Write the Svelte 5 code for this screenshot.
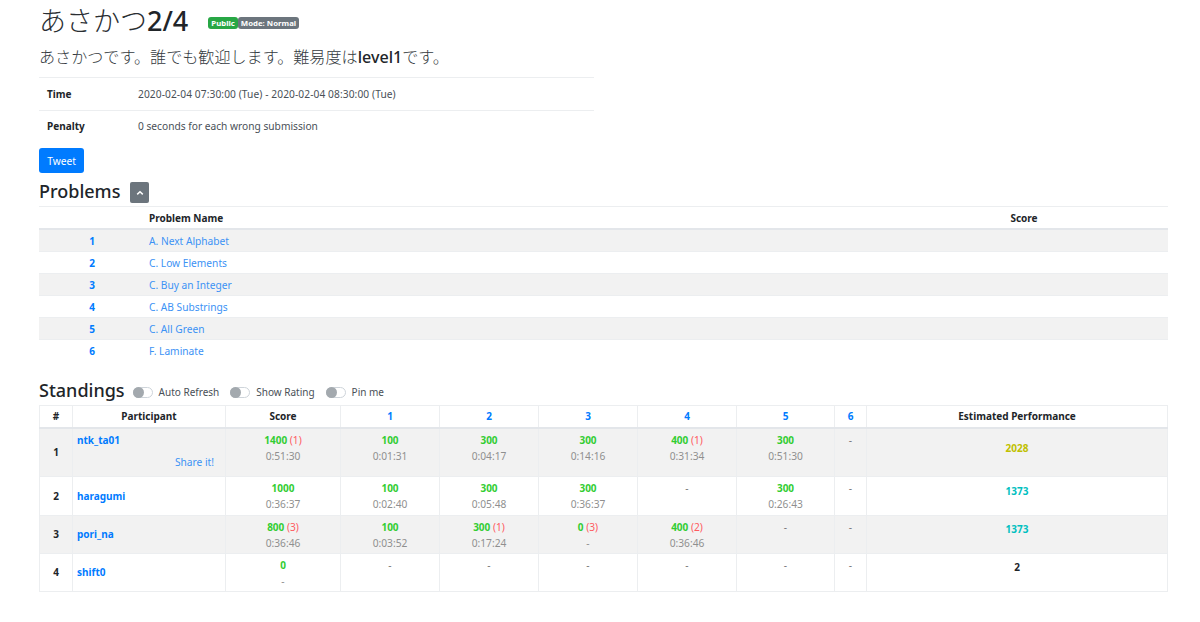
<script>
  const problems = [
    ['1', 'A. Next Alphabet'],
    ['2', 'C. Low Elements'],
    ['3', 'C. Buy an Integer'],
    ['4', 'C. AB Substrings'],
    ['5', 'C. All Green'],
    ['6', 'F. Laminate']
  ];
  const toggles = ['Auto Refresh', 'Show Rating', 'Pin me'];
  const rows = [
    { rank: 1, name: 'ntk_ta01', share: true, h: 'r1', perf: '2028', pc: 'yellow',
      score: ['1400', '1', '0:51:30'],
      cells: [['100', '', '0:01:31'], ['300', '', '0:04:17'], ['300', '', '0:14:16'], ['400', '1', '0:31:34'], ['300', '', '0:51:30'], null] },
    { rank: 2, name: 'haragumi', h: 'r2 tall', perf: '1373', pc: 'teal',
      score: ['1000', '', '0:36:37'],
      cells: [['100', '', '0:02:40'], ['300', '', '0:05:48'], ['300', '', '0:36:37'], null, ['300', '', '0:26:43'], null] },
    { rank: 3, name: 'pori_na', h: 'r2', perf: '1373', pc: 'teal',
      score: ['800', '3', '0:36:46'],
      cells: [['100', '', '0:03:52'], ['300', '1', '0:17:24'], ['0', '3', '-'], ['400', '2', '0:36:46'], null, null] },
    { rank: 4, name: 'shift0', h: 'r2', perf: '2', pc: 'dark',
      score: ['0', '', '-'],
      cells: [null, null, null, null, null, null] }
  ];
</script>

<div class="page">
  <div class="title">
    <h1>あさかつ<span class="latin">2/4</span></h1>
    <span class="badges"><span class="badge green">Public</span><span class="badge gray">Mode: Normal</span></span>
  </div>
  <h2 class="sub">あさかつです。誰でも歓迎します。難易度は<span class="latin">level1</span>です。</h2>

  <table class="info">
    <tbody>
      <tr><th>Time</th><td class="stamp">2020-02-04 07:30:00 (Tue) - 2020-02-04 08:30:00 (Tue)</td></tr>
      <tr><th>Penalty</th><td>0 seconds for each wrong submission</td></tr>
    </tbody>
  </table>

  <button class="tweet">Tweet</button>

  <div class="head problems-head">
    <h3>Problems</h3>
    <button class="collapse" aria-label="collapse">
      <svg width="8" height="6" viewBox="0 0 8 6"><path d="M1.2 4.4 4 1.8l2.8 2.6" fill="none" stroke="#fff" stroke-width="1.5"/></svg>
    </button>
  </div>

  <table class="problems">
    <thead>
      <tr><th class="pnum"></th><th class="pname">Problem Name</th><th class="pscore">Score</th></tr>
    </thead>
    <tbody>
      {#each problems as p}
        <tr><td class="pnum link strong">{p[0]}</td><td class="pname link">{p[1]}</td><td></td></tr>
      {/each}
    </tbody>
  </table>

  <div class="head standings-head">
    <h3>Standings</h3>
    {#each toggles as t}
      <span class="toggle"><span class="track"><span class="knob"></span></span>{t}</span>
    {/each}
  </div>

  <table class="standings">
    <colgroup>
      <col style="width:33px" /><col style="width:153px" /><col style="width:115px" />
      <col style="width:99px" /><col style="width:99px" /><col style="width:99px" /><col style="width:99px" /><col style="width:98px" />
      <col style="width:32px" /><col />
    </colgroup>
    <thead>
      <tr>
        <th>#</th><th>Participant</th><th>Score</th>
        {#each [1, 2, 3, 4, 5, 6] as n}<th class="link">{n}</th>{/each}
        <th>Estimated Performance</th>
      </tr>
    </thead>
    <tbody>
      {#each rows as r}
        <tr class={r.h}>
          <th class="rank">{r.rank}</th>
          <td class="who">
            <div class="name link strong">{r.name}</div>
            {#if r.share}<div class="share link">Share it!</div>{/if}
          </td>
          <td class="cell">
            <div class="pts">{r.score[0]}{#if r.score[1]}{' '}<span class="wrong">({r.score[1]})</span>{/if}</div>
            <div class="time">{r.score[2]}</div>
          </td>
          {#each r.cells as c}
            <td class="cell">
              {#if c}
                <div class="pts">{c[0]}{#if c[1]}{' '}<span class="wrong">({c[1]})</span>{/if}</div>
                <div class="time">{c[2]}</div>
              {:else}
                <div class="time dash">-</div>
              {/if}
            </td>
          {/each}
          <td class="perf {r.pc}">{r.perf}</td>
        </tr>
      {/each}
    </tbody>
  </table>
</div>

<style>
  :global(body) {
    margin: 0;
    background: #fff;
    color: #212529;
    font-family: "Noto Sans", "Noto Sans CJK JP", sans-serif;
    font-size: 10.2px;
  }
  .page {
    padding: 0 32px 0 39px;
    width: 1129px;
  }
  th { font-size: 10px; font-weight: 700; }
  .title {
    display: flex;
    align-items: center;
    height: 42px;
  }
  h1 {
    margin: 0;
    font-size: 27px;
    font-weight: 300;
    line-height: 42px;
    color: #2a2e32;
  }
  .latin { font-weight: 500; color: #212529; }
  .badges {
    margin-left: 20px;
    display: flex;
    margin-top: 3px;
  }
  .badge {
    color: #fff;
    font-size: 7.8px;
    font-weight: 700;
    line-height: 12px;
    height: 12px;
    padding: 0 3px;
    border-radius: 3px;
  }
  .green { background: #28a745; }
  .gray { background: #6c757d; }
  .sub {
    margin: 3px 0 0;
    font-size: 16.1px;
    font-weight: 300;
    line-height: 24px;
    height: 32px;
    color: #343a40;
  }
  .info {
    width: 555px;
    border-collapse: collapse;
  }
  .info th, .info td {
    border-top: 1px solid #eceef0;
    height: 31.5px;
    padding: 0;
    text-align: left;
  }
  .info th {
    width: 91px;
    padding-left: 8px;
    color: #212529;
  }
  .info td { color: #495057; }
  .info .stamp { letter-spacing: 0.09px; }
  .tweet {
    display: block;
    margin-top: 6px;
    width: 45px;
    height: 25px;
    border: 0;
    border-radius: 3px;
    background: #007bff;
    color: #fff;
    font: inherit;
    padding: 0;
  }
  .head {
    display: flex;
    align-items: center;
  }
  h3 {
    margin: 0;
    font-size: 18px;
    font-weight: 500;
    line-height: 24px;
  }
  .problems-head {
    margin-top: 5px;
    height: 28px;
    align-items: flex-start;
  }
  .problems-head h3 { margin-top: 1px; }
  .collapse {
    margin-left: 10px;
    margin-top: 4px;
    width: 19px;
    height: 21px;
    border: 0;
    padding: 0;
    border-radius: 2px;
    background: #6c757d;
    display: flex;
    align-items: center;
    justify-content: center;
  }
  .problems {
    width: 100%;
    border-collapse: collapse;
    table-layout: fixed;
  }
  .problems th, .problems td {
    padding: 0;
    height: 21px;
    border-top: 1px solid #eceef0;
    text-align: left;
  }
  .problems thead th {
    border-bottom: 2px solid #e3e6ea;
    height: 21px;
  }
  .problems tbody tr:nth-child(odd) { background: #f2f2f2; }
  .problems .pnum { width: 106px; text-align: center; }
  .problems .pname { padding-left: 4px; }
  .problems .pscore { width: 288px; text-align: center; }
  .link { color: #007bff; }
  .strong { font-weight: 700; font-size: 10px; }
  td.link:not(.strong) { color: #3c92f5; }
  .standings-head {
    margin-top: 16px;
    height: 26px;
  }
  .toggle {
    display: inline-flex;
    align-items: center;
    color: #495057;
    margin-left: 11px;
    margin-top: 4px;
    font-size: 10px;
  }
  h3 + .toggle { margin-left: 8px; }
  .track {
    display: inline-block;
    flex: none;
    box-sizing: border-box;
    width: 20px;
    height: 11px;
    border: 1px solid #ced4da;
    border-radius: 6px;
    margin-right: 6px;
    position: relative;
    background: #fff;
  }
  .knob {
    position: absolute;
    left: -1px;
    top: -1px;
    width: 11px;
    height: 11px;
    border-radius: 50%;
    background: #a3a9ae;
  }
  .standings {
    width: 100%;
    margin-top: 2px;
    border-collapse: collapse;
    table-layout: fixed;
  }
  .standings th, .standings td {
    border: 1px solid #eceef0;
    padding: 0;
    text-align: center;
    vertical-align: top;
  }
  .standings thead th {
    height: 21px;
    line-height: 21px;
    border-bottom: 2px solid #e3e6ea;
  }
  .standings thead th.link { color: #007bff; }
  .standings tbody tr:nth-child(odd) { background: #f2f2f2; }
  .r1 { height: 48px; }
  .r2 { height: 38px; }
  .tall { height: 39px; }
  .standings .rank { vertical-align: middle; }
  .standings .who {
    text-align: left;
    padding: 3px 4px 0;
  }
  .who .name { line-height: 16px; }
  .r2 .who { vertical-align: middle; padding-top: 0; }
  .share {
    text-align: right;
    margin: 6px 7px 0 0;
    line-height: 16px;
    color: #3c92f5;
    font-weight: 400;
  }
  .cell { padding-top: 3px !important; }
  .pts {
    color: #32cd32;
    font-weight: 700;
    font-size: 10px;
    line-height: 16px;
  }
  .wrong { color: #ff5a5f; font-weight: 400; font-size: 10.2px; }
  .time {
    color: #8f8f8f;
    line-height: 16px;
  }
  .dash { color: #777; }
  .standings .perf {
    font-weight: 700;
    font-size: 10px;
    vertical-align: middle;
    padding-bottom: 10px;
  }
  .r1 .perf { padding-bottom: 9px; }
  .yellow { color: #c0c000; }
  .teal { color: #00c0c0; }
  .dark { color: #212529; }
</style>
